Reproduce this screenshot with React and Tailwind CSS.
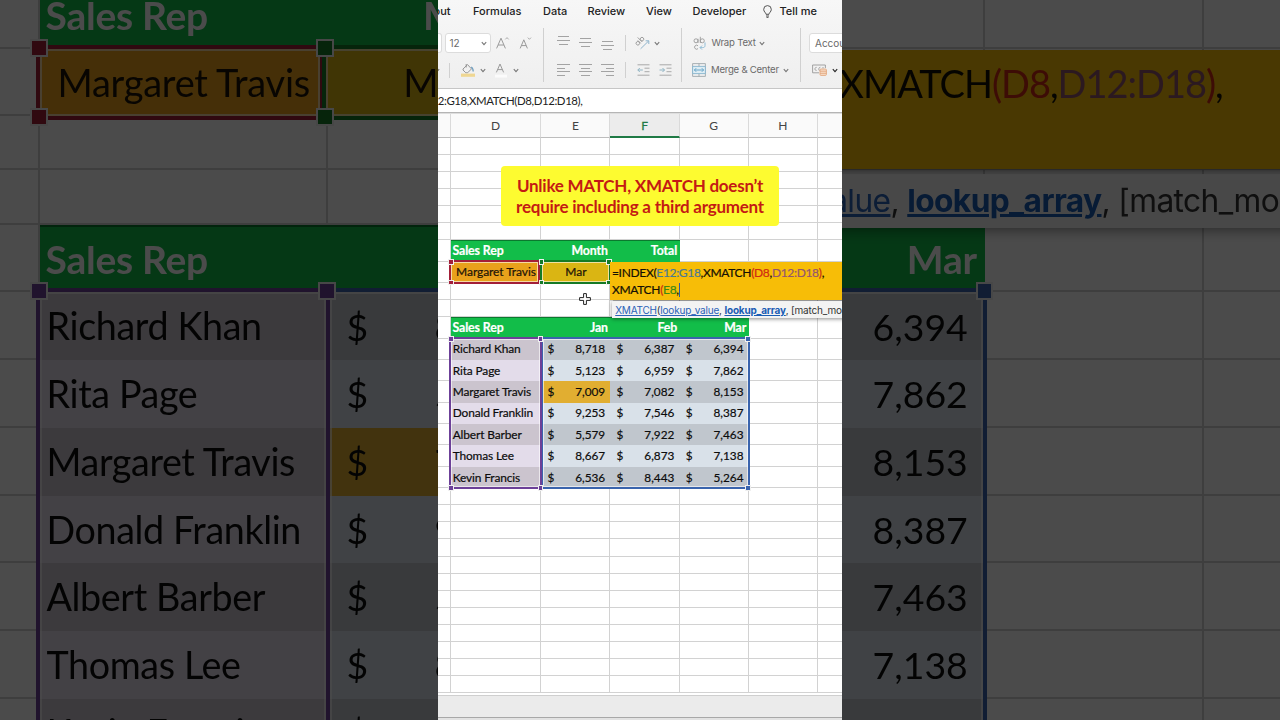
import React from "react";

const CALIBRI = "font-[Lato,'Open_Sans',sans-serif]";
const UI = "font-[Inter,'Liberation_Sans',sans-serif]";

const COLS = ["w-[12.6px]", "w-[90.8px]", "w-[69.1px]", "w-[69.2px]", "w-[69.1px]", "w-[69.2px]", "w-[25px]"];

const REPS = [
  ["Richard Khan", "8,718", "6,387", "6,394"],
  ["Rita Page", "5,123", "6,959", "7,862"],
  ["Margaret Travis", "7,009", "7,082", "8,153"],
  ["Donald Franklin", "9,253", "7,546", "8,387"],
  ["Albert Barber", "5,579", "7,922", "7,463"],
  ["Thomas Lee", "8,667", "6,873", "7,138"],
  ["Kevin Francis", "6,536", "8,443", "5,264"],
];

function Row({ tall, cells = [] }) {
  return (
    <div className={`flex ${tall ? "h-[21.38px]" : "h-[17.1px]"}`}>
      {COLS.map((w, i) => {
        const c = cells[i];
        return (
          <div
            key={i}
            className={`flex shrink-0 items-center whitespace-nowrap ${w} ${
              c ? c.cls : "border-r-[0.7px] border-b-[0.7px] border-[#d2d2d2]"
            }`}
          >
            {c ? c.node : null}
          </div>
        );
      })}
    </div>
  );
}

const head = (text, right) => ({
  cls: `bg-[#12bd49] border-t-[0.7px] border-[#0a7a2e] font-bold text-white text-[12.3px] ${right ? "justify-end pr-[2.5px]" : "pl-[1.8px]"}`,
  node: <span className="tracking-[-0.08px]">{text}</span>,
});

function money(value, fill) {
  return {
    cls: `${fill} justify-between pl-[6px] pr-[5.3px] text-[11.8px] text-[#0c0c0c]`,
    node: (
      <>
        <span>$</span>
        <span>{value}</span>
      </>
    ),
  };
}

function Handle({ color, pos }) {
  return <i className={`absolute block h-[5.6px] w-[5.6px] border-[0.8px] border-[#f0f0f0] ${color} ${pos}`} />;
}

function Range({ box, border, color, large, skipLeft, skipRight }) {
  return (
    <div className={`absolute ${large ? "border-[1.5px]" : "border-2"} ${border} ${box}`}>
      <div className="absolute inset-0 border-[0.7px] border-white/60" />
      {!skipLeft && <Handle color={color} pos="-top-[3px] -left-[3.1px]" />}
      {!skipLeft && <Handle color={color} pos="-bottom-[3.2px] -left-[3.1px]" />}
      {!skipRight && <Handle color={color} pos="-top-[3px] -right-[3.1px]" />}
      {!skipRight && <Handle color={color} pos="-bottom-[3.2px] -right-[3.1px]" />}
    </div>
  );
}

function Sheet({ large }) {
  return (
    <div
      className={`relative w-[404px] overflow-hidden bg-white pb-[1.8px] leading-none ${CALIBRI} ${
        large ? "" : "[-webkit-text-stroke:0.2px]"
      }`}
    >
      {Array.from({ length: 6 }, (_, i) => (
        <Row key={i} />
      ))}
      <Row tall cells={[null, head("Sales Rep"), head("Month", true), head("Total", true)]} />
      <Row
        tall
        cells={[
          null,
          {
            cls: "justify-center bg-[#e9a11b] text-[12px] tracking-[-0.08px] text-[#1c1408]",
            node: <span>Margaret Travis</span>,
          },
          { cls: "justify-center bg-[#dab513] text-[12px] text-[#1c1408]", node: "Mar" },
        ]}
      />
      <Row />
      <Row />
      <Row tall cells={[null, head("Sales Rep"), head("Jan", true), head("Feb", true), head("Mar", true)]} />
      {REPS.map(([name, jan, feb, mar], i) => {
        const fill = i % 2 ? "bg-[#d9e1e9]" : "bg-[#c0c6cd]";
        return (
          <Row
            key={name}
            tall
            cells={[
              null,
              {
                cls: `${i % 2 ? "bg-[#e3dcea]" : "bg-[#cbc4ce]"} pl-[2.1px] text-[11.9px] tracking-[-0.12px] text-[#0c0c0c]`,
                node: <span>{name}</span>,
              },
              money(jan, i === 2 ? "bg-[#e1ae31]" : fill),
              money(feb, fill),
              money(mar, fill),
            ]}
          />
        );
      })}
      {Array.from({ length: 12 }, (_, i) => (
        <Row key={i} />
      ))}

      <Range large={large} box="left-[11.3px] top-[122.7px] h-[23.8px] w-[91px]" border="border-[#a31f38]" color="bg-[#a31f38]" skipRight />
      <Range large={large} box="left-[101.7px] top-[122.7px] h-[23.8px] w-[71.3px]" border="border-[#157a26]" color="bg-[#157a26]" />
      <Range large={large} box="left-[103px] top-[199.5px] h-[152.3px] w-[208.7px]" border="border-[#3a64ad]" color="bg-[#3a64ad]" skipLeft />
      <Range large={large} box="left-[11.3px] top-[199.5px] h-[152.3px] w-[93px]" border="border-[#6c4098]" color="bg-[#6c4098]" />

      <div className="absolute top-[163.5px] left-[174px] flex h-[17px] w-[240px] items-center bg-[#f3f3f3] pl-[3.2px] shadow-[0_1px_4px_rgba(0,0,0,0.45)]">
        <div className={`text-[10px] tracking-[-0.19px] whitespace-pre text-[#333] [-webkit-text-stroke:0] ${UI}`}>
          <span className="text-[#2a62b8] underline">XMATCH</span>(
          <span className="text-[#2a62b8] underline">lookup_value</span>,{" "}
          <span className="font-bold text-[#1a5cb4] underline">lookup_array</span>, [match_mo
        </div>
      </div>
      <div className="absolute top-[124.3px] left-[172.4px] h-[37.6px] w-[240px] bg-[#f7bd07] pt-[2px] pl-[1.6px] text-[12px] leading-[17.3px] tracking-[-0.32px] whitespace-pre text-[#141005] shadow-[0_0.5px_1px_rgba(0,0,0,0.35)]">
        <div>
          =INDEX(<span className="text-[#4a7a94]">E12:G18</span>,XMATCH<span className="text-[#cf2a15]">(</span>
          <span className="text-[#cf2a15]">D8</span>,<span className="text-[#94566f]">D12:D18</span>
          <span className="text-[#cf2a15]">)</span>,
        </div>
        <div className="flex items-center">
          XMATCH<span className="text-[#cf2a15]">(</span>
          <span className="text-[#3f8a12]">E8</span>,
          {!large && <i className="ml-[0.5px] block h-[14px] w-px bg-[#2f5aa0]" />}
        </div>
      </div>
    </div>
  );
}

function Chevron({ dark, className = "" }) {
  return (
    <svg className={`shrink-0 ${className}`} width="6" height="5" viewBox="0 0 6 5" fill="none">
      <path d="M0.8 1.2 3 3.6 5.2 1.2" stroke={dark ? "#222" : "#777"} strokeWidth="1.1" />
    </svg>
  );
}

function Lines({ rows, className = "" }) {
  return (
    <svg className={`shrink-0 ${className}`} width="13" height="16" viewBox="0 0 13 16">
      {rows.map(([x, y, w]) => (
        <rect key={y} x={x} y={y} width={w} height="1" fill="#a3a3a3" />
      ))}
    </svg>
  );
}

function Rule({ className = "" }) {
  return <i className={`block w-px shrink-0 bg-[#d0d0d0] ${className}`} />;
}

function Indent({ right, className = "" }) {
  return (
    <svg className={`shrink-0 ${className}`} width="13" height="12" viewBox="0 0 13 12" fill="none">
      <path d="M0.5 0.8h12M7.5 4.2h5M7.5 7.7h5M0.5 11.2h12" stroke="#a9a9a9" />
      <path d={right ? "M0.5 6h5M3.5 4l2 2-2 2" : "M5.8 6h-5M2.8 4l-2 2 2 2"} stroke="#8fb4c4" />
    </svg>
  );
}

function Ribbon() {
  return (
    <div className={`h-[89px] shrink-0 border-b border-[#c6c6c6] bg-gradient-to-b from-[#f7f7f7] to-[#efefef] leading-none ${UI}`}>
      <div className="flex h-[28px] items-center overflow-hidden pb-[5px] text-[11px] font-medium whitespace-nowrap text-[#222]">
        <div className="flex w-[12.5px] shrink-0 justify-end overflow-hidden">Layout</div>
        <div className="ml-[22.5px] w-[70px]">Formulas</div>
        <div className="w-[44.5px]">Data</div>
        <div className="w-[58.5px]">Review</div>
        <div className="w-[46.5px]">View</div>
        <div className="w-[70px]">Developer</div>
        <svg className="mr-[8px] shrink-0" width="9" height="13" viewBox="0 0 9 13" fill="none" stroke="#444" strokeWidth="0.9">
          <path d="M3 9.3C3 7.6 0.7 6.9 0.7 4.4a3.8 3.8 0 0 1 7.6 0C8.3 6.9 6 7.6 6 9.3ZM3 11h3M3.5 12.4h2" />
        </svg>
        <div>Tell me</div>
      </div>

      <div className="flex h-[54px] overflow-hidden text-[10px] whitespace-nowrap text-[#6a6a6a]">
        <div className="flex w-[105px] shrink-0 flex-col">
          <div className="flex h-[30px] items-center">
            <i className="block h-[20px] w-[4px] shrink-0 rounded-r-[3px] border border-l-0 border-[#dcdcdc] bg-white" />
            <div className="ml-[2.5px] flex h-[20px] w-[46px] shrink-0 items-center justify-between rounded-[3px] border border-[#dcdcdc] bg-white pr-[2.5px] pl-[4px]">
              12
              <Chevron />
            </div>
            <svg className="ml-[5.5px] shrink-0" width="14" height="14" viewBox="0 0 14 14" fill="none" stroke="#9a9a9a">
              <path d="M0.6 12.4 5 2.2l4.4 10.2M2.1 9h5.8" />
              <path d="M9.3 3.4 11 1.6l1.7 1.8" strokeWidth="0.8" />
            </svg>
            <svg className="ml-[9px] shrink-0" width="13" height="14" viewBox="0 0 13 14" fill="none" stroke="#9a9a9a">
              <path d="M1.2 12.4 4.8 3.8l3.6 8.6M2.5 9.6h4.6" />
              <path d="M8.8 1.6 10.4 3.3 12 1.6" strokeWidth="0.8" />
            </svg>
          </div>
          <div className="flex h-[24px] items-center">
            <Chevron className="-ml-[4px]" />
            <Rule className="ml-[9px] h-[15px]" />
            <svg className="ml-[11px] shrink-0" width="14" height="14" viewBox="0 0 14 14" fill="none">
              <path d="M2 6 6.5 1.6l4 4.3L6.6 9.8H4.8L2 7ZM5.2 1v3.5" stroke="#8c8c8c" strokeWidth="0.9" />
              <path d="M10.2 4c1.6.8 2 2 2 4.6" stroke="#6f9fc0" strokeWidth="1.3" />
              <rect x="0" y="10.6" width="14" height="3.2" fill="#efd793" />
            </svg>
            <Chevron className="ml-[5px]" />
            <svg className="ml-[9px] shrink-0" width="13" height="15" viewBox="0 0 13 15" fill="none">
              <path d="M1.4 9.4 5 1l3.6 8.4M2.6 6.6h4.8" stroke="#9a9a9a" />
              <rect x="0" y="11.6" width="12" height="3" fill="#fbfbfb" />
            </svg>
            <Chevron className="ml-[5px]" />
          </div>
        </div>
        <Rule className="h-full" />
        <div className="flex w-[137px] shrink-0 flex-col">
          <div className="flex h-[30px] items-center">
            <Lines className="ml-[12.5px]" rows={[[1, 1, 11], [0, 5, 13], [2, 9, 9]]} />
            <Lines className="ml-[9px]" rows={[[1, 3, 11], [0, 7, 13], [2, 11, 9]]} />
            <Lines className="ml-[9px]" rows={[[1, 6, 11], [0, 10, 13], [2, 14, 9]]} />
            <Rule className="ml-[11px] h-[16px]" />
            <svg className="ml-[9px] shrink-0" width="15" height="14" viewBox="0 0 15 14" fill="none">
              <g transform="rotate(-45 5 6)" stroke="#999" strokeWidth="0.9">
                <circle cx="2.6" cy="5.4" r="1.8" />
                <path d="M4.6 3.4v4M6.6 1.2v6.2" />
                <circle cx="8.4" cy="5.4" r="1.8" />
              </g>
              <path d="M5.6 12.8 13.6 5M10.6 4.8h3.2V8" stroke="#8fb4cc" />
            </svg>
            <Chevron className="ml-[4px]" />
          </div>
          <div className="flex h-[24px] items-center">
            <Lines className="ml-[12.5px]" rows={[[0, 2, 13], [0, 6, 8], [0, 9, 13], [0, 13, 8]]} />
            <Lines className="ml-[9px]" rows={[[0, 2, 13], [2, 6, 9], [0, 9, 13], [2, 13, 9]]} />
            <Lines className="ml-[9px]" rows={[[0, 2, 13], [5, 6, 8], [0, 9, 13], [5, 13, 8]]} />
            <Rule className="ml-[11px] h-[16px]" />
            <Indent className="ml-[11px]" />
            <Indent right className="ml-[9.5px]" />
          </div>
        </div>
        <Rule className="h-full" />
        <div className="flex w-[118px] shrink-0 flex-col">
          <div className="flex h-[30px] items-center">
            <svg className="ml-[11px] shrink-0" width="14" height="15" viewBox="0 0 14 15" fill="none" stroke="#9a9a9a" strokeWidth="0.9">
              <circle cx="3" cy="4.8" r="2" />
              <path d="M5 2.8v4.2M7.3 0.8V7" />
              <circle cx="9.3" cy="4.8" r="2" />
              <path d="M5 9.8a2 2 0 1 0 0 2.8" />
              <path d="M12 6.4v3.2c0 1.5-1 2-2.3 2H7.2M9 9.6l-2 2 2 2" stroke="#86b7d2" />
            </svg>
            <span className="ml-[4.5px] w-[43px] text-[9.6px] tracking-[-0.2px]">Wrap Text</span>
            <Chevron className="ml-[4px]" />
          </div>
          <div className="flex h-[24px] items-center">
            <svg className="ml-[10px] shrink-0" width="14" height="14" viewBox="0 0 14 14" fill="none" strokeWidth="0.9">
              <path d="M0.6 0.6h12.8v12.8H0.6ZM7 0.6v3M7 10.4v3" stroke="#9fa8ad" />
              <path d="M0.6 3.4h12.8v7.2H0.6Z" fill="#deedf4" stroke="#86b4cd" />
              <path d="M2.4 7h9.2M4.2 5.2 2.4 7l1.8 1.8M9.8 5.2 11.6 7 9.8 8.8" stroke="#5c9ec4" />
            </svg>
            <span className="ml-[5px] w-[68px] text-[9.6px] tracking-[-0.25px]">Merge &amp; Center</span>
            <Chevron className="ml-[3.5px]" />
          </div>
        </div>
        <Rule className="h-full" />
        <div className="flex w-[50px] shrink-0 flex-col">
          <div className="flex h-[30px] items-center">
            <div className="ml-[8px] flex h-[20px] w-[60px] shrink-0 items-center rounded-[3px] border border-[#dcdcdc] bg-white pl-[5px]">
              Accou
            </div>
          </div>
          <div className="flex h-[24px] items-center">
            <svg className="ml-[11px] shrink-0" width="15" height="12" viewBox="0 0 15 12" fill="none" strokeWidth="0.9">
              <path d="M7 8.8H0.6V1h12.8v3" stroke="#999" />
              <path d="M4.6 3.4c-2-.4-2.4 3.4 0 3M8.4 3.2c-2 0-2 3.4-.8 3.4M11 3v1.4" stroke="#999" />
              <rect x="8" y="5" width="6.4" height="6.4" rx="1" fill="#f8ddc8" stroke="#e2a77e" />
              <path d="M8 7.2h6.4M8 9.3h6.4" stroke="#e2a77e" />
            </svg>
            <Chevron dark className="ml-[4.5px]" />
          </div>
        </div>
      </div>
    </div>
  );
}

function ColumnHeads() {
  const names = ["", "D", "E", "F", "G", "H", ""];
  return (
    <div className={`flex h-[23.7px] shrink-0 bg-[#fafafa] text-[12px] leading-none text-[#444] ${CALIBRI}`}>
      {names.map((n, i) => (
        <div
          key={i}
          className={`flex shrink-0 items-center justify-center border-r border-[#dadada] pt-[2px] ${COLS[i]} ${
            n === "F" ? "border-b-2 border-b-[#1f7a45] bg-[#ececec] text-[#1f7a45] [-webkit-text-stroke:0.3px]" : "border-b border-b-[#bdbdbd]"
          }`}
        >
          {n}
        </div>
      ))}
    </div>
  );
}

export default function App() {
  return (
    <div className="relative h-[720px] w-[1280px] overflow-hidden bg-black">
      <div className="absolute inset-0 overflow-hidden" aria-hidden="true">
        <div className="-mt-[344.2px] opacity-[0.295] blur-[0.6px]">
          <div className="[zoom:3.168]">
            <Sheet large />
          </div>
        </div>
      </div>

      <div className="relative mx-auto flex h-[720px] w-[404px] flex-col overflow-hidden bg-white">
        <Ribbon />
        <div className={`flex h-[22.5px] shrink-0 items-center overflow-hidden bg-white pt-px text-[11.4px] leading-none tracking-[-0.38px] whitespace-nowrap text-[#222] ${CALIBRI}`}>
          <span className="-ml-[6.5px]">12:G18,XMATCH(D8,D12:D18),</span>
        </div>
        <div className="h-[2.5px] shrink-0 border-t border-[#b5b5b5] bg-[#dedede]" />
        <ColumnHeads />
        <Sheet />
        <div className="h-[22.3px] shrink-0 border-t border-[#cfcfcf] bg-[#ebebeb]" />
        <div className="flex-1 border-t border-[#a8a8a8] bg-[#e2e2e2]" />

        <div className={`absolute top-[165.5px] left-[63px] flex h-[60px] w-[278px] flex-col items-center justify-center rounded-[4px] bg-[#fdfb30] pt-[2px] text-[17px] leading-[20.6px] font-bold tracking-[-0.24px] whitespace-nowrap text-[#c41a14] ${CALIBRI}`}>
          <div>Unlike MATCH, XMATCH doesn’t</div>
          <div>require including a third argument</div>
        </div>
        <svg className="absolute top-[293px] left-[141px]" width="12" height="12" viewBox="0 0 12 12">
          <path d="M4.6 0.6h2.8v4h4v2.8h-4v4H4.6v-4h-4V4.6h4Z" fill="#fff" stroke="#222" />
        </svg>
      </div>
    </div>
  );
}
